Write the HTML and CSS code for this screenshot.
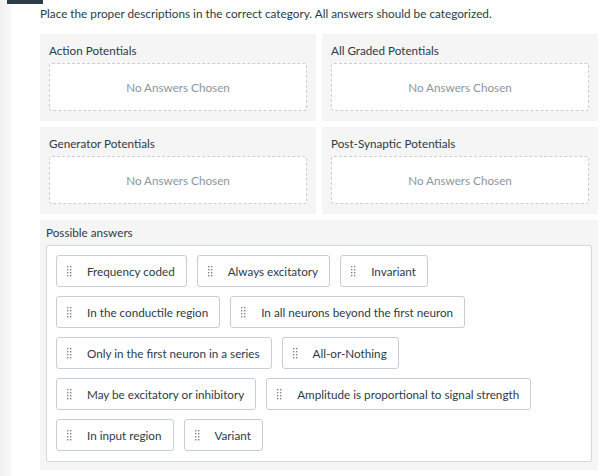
FILE: index.html
```html
<!DOCTYPE html>
<html>
<head>
<meta charset="utf-8">
<link rel="stylesheet" href="styles.css">
</head>
<body>
<div class="page">
  <div class="tab"></div>
  <aside class="rail"></aside>
  <main class="main">
    <p class="instructions">Place the proper descriptions in the correct category. All answers should be categorized.</p>
    <div class="categories">
      <section class="category">
        <h3 class="cat-title">Action Potentials</h3>
        <div class="dropzone">No Answers Chosen</div>
      </section>
      <section class="category">
        <h3 class="cat-title">All Graded Potentials</h3>
        <div class="dropzone">No Answers Chosen</div>
      </section>
      <section class="category">
        <h3 class="cat-title">Generator Potentials</h3>
        <div class="dropzone">No Answers Chosen</div>
      </section>
      <section class="category">
        <h3 class="cat-title">Post-Synaptic Potentials</h3>
        <div class="dropzone">No Answers Chosen</div>
      </section>
    </div>
    <section class="possible">
      <h3 class="possible-title">Possible answers</h3>
      <div class="answers">
        <div class="chip"><svg class="grip" width="5" height="11" viewBox="0 0 5 11"><g fill="#7b8790"><rect x="0" y="0" width="1.4" height="1.4"/><rect x="3" y="0" width="1.4" height="1.4"/><rect x="0" y="3" width="1.4" height="1.4"/><rect x="3" y="3" width="1.4" height="1.4"/><rect x="0" y="6" width="1.4" height="1.4"/><rect x="3" y="6" width="1.4" height="1.4"/><rect x="0" y="9" width="1.4" height="1.4"/><rect x="3" y="9" width="1.4" height="1.4"/></g></svg><span>Frequency coded</span></div>
        <div class="chip"><svg class="grip" width="5" height="11" viewBox="0 0 5 11"><g fill="#7b8790"><rect x="0" y="0" width="1.4" height="1.4"/><rect x="3" y="0" width="1.4" height="1.4"/><rect x="0" y="3" width="1.4" height="1.4"/><rect x="3" y="3" width="1.4" height="1.4"/><rect x="0" y="6" width="1.4" height="1.4"/><rect x="3" y="6" width="1.4" height="1.4"/><rect x="0" y="9" width="1.4" height="1.4"/><rect x="3" y="9" width="1.4" height="1.4"/></g></svg><span>Always excitatory</span></div>
        <div class="chip"><svg class="grip" width="5" height="11" viewBox="0 0 5 11"><g fill="#7b8790"><rect x="0" y="0" width="1.4" height="1.4"/><rect x="3" y="0" width="1.4" height="1.4"/><rect x="0" y="3" width="1.4" height="1.4"/><rect x="3" y="3" width="1.4" height="1.4"/><rect x="0" y="6" width="1.4" height="1.4"/><rect x="3" y="6" width="1.4" height="1.4"/><rect x="0" y="9" width="1.4" height="1.4"/><rect x="3" y="9" width="1.4" height="1.4"/></g></svg><span>Invariant</span></div>
        <div class="chip"><svg class="grip" width="5" height="11" viewBox="0 0 5 11"><g fill="#7b8790"><rect x="0" y="0" width="1.4" height="1.4"/><rect x="3" y="0" width="1.4" height="1.4"/><rect x="0" y="3" width="1.4" height="1.4"/><rect x="3" y="3" width="1.4" height="1.4"/><rect x="0" y="6" width="1.4" height="1.4"/><rect x="3" y="6" width="1.4" height="1.4"/><rect x="0" y="9" width="1.4" height="1.4"/><rect x="3" y="9" width="1.4" height="1.4"/></g></svg><span>In the conductile region</span></div>
        <div class="chip"><svg class="grip" width="5" height="11" viewBox="0 0 5 11"><g fill="#7b8790"><rect x="0" y="0" width="1.4" height="1.4"/><rect x="3" y="0" width="1.4" height="1.4"/><rect x="0" y="3" width="1.4" height="1.4"/><rect x="3" y="3" width="1.4" height="1.4"/><rect x="0" y="6" width="1.4" height="1.4"/><rect x="3" y="6" width="1.4" height="1.4"/><rect x="0" y="9" width="1.4" height="1.4"/><rect x="3" y="9" width="1.4" height="1.4"/></g></svg><span>In all neurons beyond the first neuron</span></div>
        <div class="chip"><svg class="grip" width="5" height="11" viewBox="0 0 5 11"><g fill="#7b8790"><rect x="0" y="0" width="1.4" height="1.4"/><rect x="3" y="0" width="1.4" height="1.4"/><rect x="0" y="3" width="1.4" height="1.4"/><rect x="3" y="3" width="1.4" height="1.4"/><rect x="0" y="6" width="1.4" height="1.4"/><rect x="3" y="6" width="1.4" height="1.4"/><rect x="0" y="9" width="1.4" height="1.4"/><rect x="3" y="9" width="1.4" height="1.4"/></g></svg><span>Only in the first neuron in a series</span></div>
        <div class="chip"><svg class="grip" width="5" height="11" viewBox="0 0 5 11"><g fill="#7b8790"><rect x="0" y="0" width="1.4" height="1.4"/><rect x="3" y="0" width="1.4" height="1.4"/><rect x="0" y="3" width="1.4" height="1.4"/><rect x="3" y="3" width="1.4" height="1.4"/><rect x="0" y="6" width="1.4" height="1.4"/><rect x="3" y="6" width="1.4" height="1.4"/><rect x="0" y="9" width="1.4" height="1.4"/><rect x="3" y="9" width="1.4" height="1.4"/></g></svg><span>All-or-Nothing</span></div>
        <div class="chip"><svg class="grip" width="5" height="11" viewBox="0 0 5 11"><g fill="#7b8790"><rect x="0" y="0" width="1.4" height="1.4"/><rect x="3" y="0" width="1.4" height="1.4"/><rect x="0" y="3" width="1.4" height="1.4"/><rect x="3" y="3" width="1.4" height="1.4"/><rect x="0" y="6" width="1.4" height="1.4"/><rect x="3" y="6" width="1.4" height="1.4"/><rect x="0" y="9" width="1.4" height="1.4"/><rect x="3" y="9" width="1.4" height="1.4"/></g></svg><span>May be excitatory or inhibitory</span></div>
        <div class="chip"><svg class="grip" width="5" height="11" viewBox="0 0 5 11"><g fill="#7b8790"><rect x="0" y="0" width="1.4" height="1.4"/><rect x="3" y="0" width="1.4" height="1.4"/><rect x="0" y="3" width="1.4" height="1.4"/><rect x="3" y="3" width="1.4" height="1.4"/><rect x="0" y="6" width="1.4" height="1.4"/><rect x="3" y="6" width="1.4" height="1.4"/><rect x="0" y="9" width="1.4" height="1.4"/><rect x="3" y="9" width="1.4" height="1.4"/></g></svg><span>Amplitude is proportional to signal strength</span></div>
        <div class="chip"><svg class="grip" width="5" height="11" viewBox="0 0 5 11"><g fill="#7b8790"><rect x="0" y="0" width="1.4" height="1.4"/><rect x="3" y="0" width="1.4" height="1.4"/><rect x="0" y="3" width="1.4" height="1.4"/><rect x="3" y="3" width="1.4" height="1.4"/><rect x="0" y="6" width="1.4" height="1.4"/><rect x="3" y="6" width="1.4" height="1.4"/><rect x="0" y="9" width="1.4" height="1.4"/><rect x="3" y="9" width="1.4" height="1.4"/></g></svg><span>In input region</span></div>
        <div class="chip"><svg class="grip" width="5" height="11" viewBox="0 0 5 11"><g fill="#7b8790"><rect x="0" y="0" width="1.4" height="1.4"/><rect x="3" y="0" width="1.4" height="1.4"/><rect x="0" y="3" width="1.4" height="1.4"/><rect x="3" y="3" width="1.4" height="1.4"/><rect x="0" y="6" width="1.4" height="1.4"/><rect x="3" y="6" width="1.4" height="1.4"/><rect x="0" y="9" width="1.4" height="1.4"/><rect x="3" y="9" width="1.4" height="1.4"/></g></svg><span>Variant</span></div>
      </div>
    </section>
  </main>
</div>
</body>
</html>
```

FILE: styles.css
```css
* { box-sizing: border-box; }
html, body { margin: 0; padding: 0; background: #ffffff; }
body {
  font-family: Lato, "Liberation Sans", sans-serif;
  color: #2d3b45;
  font-size: 11.7px;
  width: 603px;
  height: 476px;
  overflow: hidden;
}
.page {
  position: relative;
  display: flex;
  height: 476px;
}
.tab {
  position: absolute;
  left: 7px;
  top: 0;
  width: 36px;
  height: 4px;
  background: #2d3b45;
}
.rail {
  width: 12px;
  flex: none;
  background: linear-gradient(to right, #f1f1f1, #f6f6f6 70%, #fbfbfb);
}
.main {
  flex: 1;
  padding: 6px 5px 0 28px;
}
.instructions {
  margin: 0 0 12px 0;
  font-size: 11.75px;
  line-height: 16px;
}
.categories {
  display: grid;
  grid-template-columns: 276px 276px;
  column-gap: 6px;
  row-gap: 6px;
}
.category {
  background: #f5f5f5;
  padding: 8px 9px 10px 9px;
}
.cat-title {
  margin: 0 0 5px 0;
  font-size: 11.7px;
  font-weight: 400;
  line-height: 16px;
}
.dropzone {
  height: 48px;
  border: 1px dashed #c7cdd1;
  border-radius: 3px;
  background: #ffffff;
  color: #8b969e;
  font-size: 11.7px;
  display: flex;
  align-items: center;
  justify-content: center;
}
.possible {
  margin-top: 6px;
  width: 558px;
  background: #f5f5f5;
  padding: 5px 6px 8px 6px;
}
.possible-title {
  margin: 0 0 5px 0;
  font-size: 11.7px;
  font-weight: 400;
  line-height: 15px;
}
.answers {
  background: #ffffff;
  border: 1px solid #d3d8db;
  border-radius: 2px;
  padding: 9px 9px 10px 9px;
  display: flex;
  flex-wrap: wrap;
  column-gap: 10px;
  row-gap: 9px;
}
.chip {
  height: 32px;
  display: flex;
  align-items: center;
  border: 1px solid #c7cdd1;
  border-radius: 3px;
  padding: 0 11px 0 10px;
  background: #ffffff;
  font-size: 11.7px;
  white-space: nowrap;
}
.grip {
  flex: none;
  margin-right: 15px;
}
```
